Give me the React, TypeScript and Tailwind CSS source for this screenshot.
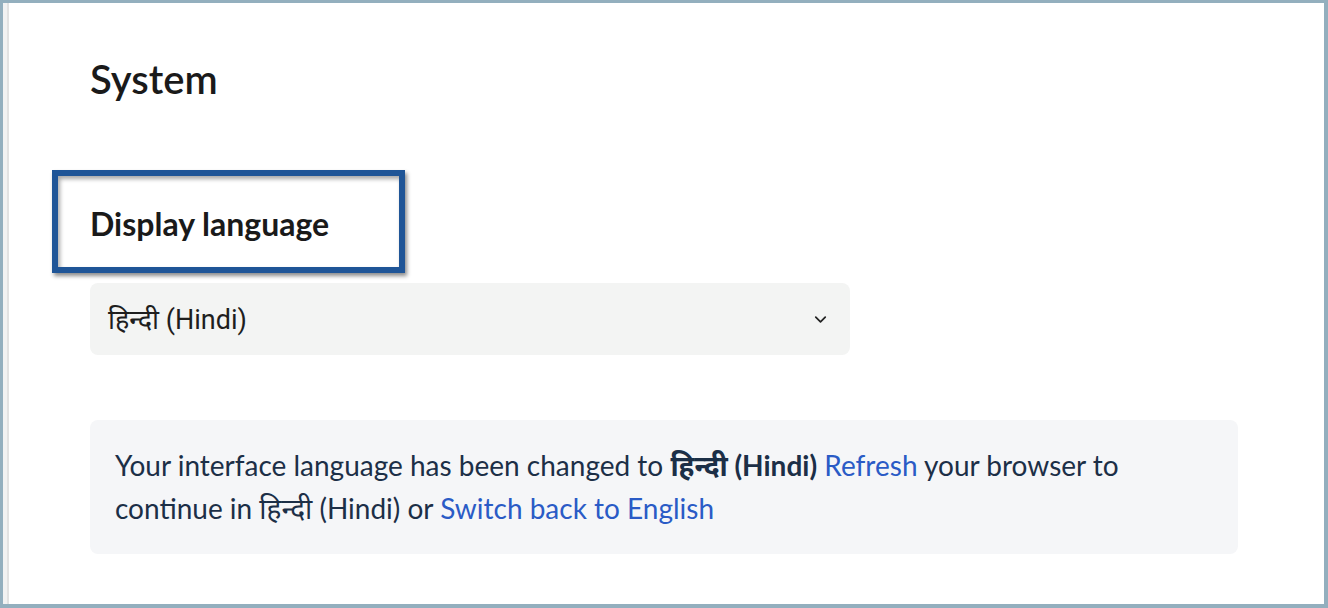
import { ChevronDown } from 'lucide-react'

const sans = 'font-[Lato,"Noto_Sans_Devanagari","Noto_Sans",sans-serif]'

function LanguageSelect() {
  return (
    <div className="flex items-center justify-between w-[760px] h-[72px] rounded-lg bg-[#f3f4f3] pl-[18px] pr-[20px]">
      <span className='font-[Roboto,"Noto_Sans_Devanagari","Noto_Sans",sans-serif] text-[27px] text-[#1e1e1e] mt-[3px]'>हिन्दी (Hindi)</span>
      <ChevronDown className="w-[19px] h-[19px] text-[#222]" strokeWidth={2.2} />
    </div>
  )
}

function ChangedNotice() {
  return (
    <div className="w-[1148px] rounded-lg bg-[#f5f6f8] px-[25px] pt-[24px] pb-[24px]">
      <p className="w-[1040px] text-[28px] leading-[43px] text-[#1c2f47]">
        Your interface language has been changed to <b className="font-bold">हिन्दी (Hindi)</b>{' '}
        <a className="text-[#2a5bc6]">Refresh</a> your browser to continue in हिन्दी (Hindi) or{' '}
        <a className="text-[#2a5bc6]">Switch back to English</a>
      </p>
    </div>
  )
}

export default function App() {
  return (
    <div className={`${sans} w-[1328px] h-[608px] bg-[#93afbe] pt-[3px] pl-[3px] pr-[4px] pb-[4px]`}>
      <div className="flex h-full bg-white">
        <div className="w-[4px] bg-[#f2f2f2]" />
        <div className="w-[2px] bg-[#e2e2e2]" />
        <div className="relative flex-1 pl-[81px] pt-[49px]">
          <h1 className="text-[40px] font-semibold text-[#1a1a1a] leading-[54px]">System</h1>
          <h2 className="mt-[98px] text-[32px] font-bold text-[#1a1a1a] leading-[40px]">Display language</h2>
          {/* annotation box over the heading */}
          <div className="absolute left-[43px] top-[167px] w-[353px] h-[103px] border-[6px] border-[#1f5597] shadow-[2px_3px_4px_rgba(0,0,0,0.45),inset_2px_3px_4px_rgba(0,0,0,0.35)]" />
          <div className="mt-[39px]">
            <LanguageSelect />
          </div>
          <div className="mt-[65px]">
            <ChangedNotice />
          </div>
        </div>
      </div>
    </div>
  )
}
